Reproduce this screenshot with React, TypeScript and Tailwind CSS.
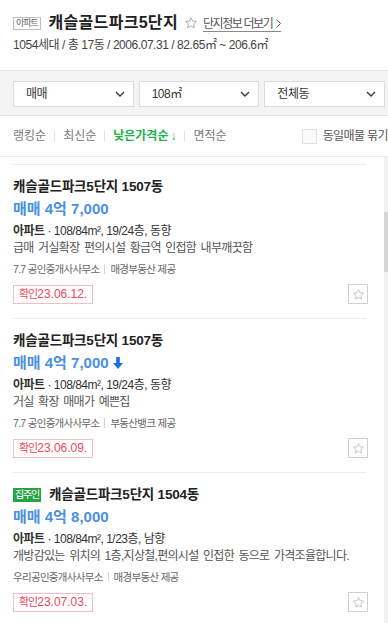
import React from "react";

const FONT = { fontFamily: '"Liberation Sans", "Noto Sans CJK KR", sans-serif' };

interface Listing {
  owner?: boolean;
  title: string;
  price: string;
  down?: boolean;
  spec: string;
  desc: string;
  agent: string;
  provider: string;
  confirmed: string;
}

const listings: Listing[] = [
  {
    title: "캐슬골드파크5단지 1507동",
    price: "매매 4억 7,000",
    spec: "108/84m², 19/24층, 동향",
    desc: "급매 거실확장 편의시설 황금역 인접함 내부깨끗함",
    agent: "7.7 공인중개사사무소",
    provider: "매경부동산 제공",
    confirmed: "23.06.12.",
  },
  {
    title: "캐슬골드파크5단지 1507동",
    price: "매매 4억 7,000",
    down: true,
    spec: "108/84m², 19/24층, 동향",
    desc: "거실 확장 매매가 예쁜집",
    agent: "7.7 공인중개사사무소",
    provider: "부동산뱅크 제공",
    confirmed: "23.06.09.",
  },
  {
    owner: true,
    title: "캐슬골드파크5단지 1504동",
    price: "매매 4억 8,000",
    spec: "108/84m², 1/23층, 남향",
    desc: "개방감있는 위치의 1층,지상철,편의시설 인접한 동으로 가격조율합니다.",
    agent: "우리공인중개사사무소",
    provider: "매경부동산 제공",
    confirmed: "23.07.03.",
  },
];

function StarIcon({ className }: { className?: string }) {
  return (
    <svg viewBox="0 0 24 24" className={className} fill="none" stroke="currentColor" strokeWidth="1.4" strokeLinejoin="round">
      <path d="M12 2.8l2.75 5.9 6.45.75-4.8 4.4 1.3 6.4L12 17.05 6.3 20.25l1.3-6.4-4.8-4.4 6.45-.75z" />
    </svg>
  );
}

function Chevron() {
  return (
    <svg viewBox="0 0 10 6" className="h-[6px] w-[10px] text-[#333]" fill="none" stroke="currentColor" strokeWidth="1.3">
      <path d="M1 1l4 4 4-4" />
    </svg>
  );
}

function Select({ label }: { label: string }) {
  return (
    <div className="flex h-[26px] flex-1 items-center justify-between border border-[#dcdcdc] bg-white pl-[12px] pr-[8px] text-[12px] tracking-[-0.5px] text-[#333]">
      <span>{label}</span>
      <Chevron />
    </div>
  );
}

function Sep() {
  return <span className="mx-[8px] h-[11px] w-px bg-[#e2e2e2]" />;
}

function ListingItem({ item }: { item: Listing }) {
  return (
    <div className="border-b border-[#ececec] pt-[13px] pb-[14px]">
      <div className="flex items-center leading-[18px]">
        {item.owner && (
          <span className="mr-[8px] bg-[#27a345] px-[2px] text-[10px] leading-[14px] tracking-[-1.2px] text-white">집주인</span>
        )}
        <span className="text-[13.5px] font-bold tracking-[-0.2px] text-[#222]">{item.title}</span>
      </div>
      <div className="mt-[2px] flex items-center text-[15px] font-bold leading-[22px] text-[#4a8fe2]">
        {item.price}
        {item.down && (
          <svg viewBox="0 0 10 12" className="ml-[4px] h-[12px] w-[10px] text-[#1a6fe0]" fill="currentColor">
            <path d="M3.2 0h3.6v6H10L5 12 0 6h3.2z" />
          </svg>
        )}
      </div>
      <div className="mt-[3px] text-[12px] leading-[17px] tracking-[-0.5px] text-[#333]">
        <span className="font-bold">아파트</span> · {item.spec}
      </div>
      <div className="text-[12px] leading-[17px] tracking-[-0.7px] text-[#555] [word-spacing:1.8px]">{item.desc}</div>
      <div className="mt-[4px] flex items-center text-[10.5px] leading-[16px] tracking-[-0.7px] text-[#666]">
        {item.agent}
        <span className="mx-[5px] h-[10px] w-px bg-[#d5d5d5]" />
        {item.provider}
      </div>
      <div className="mt-[7px] flex items-center justify-between">
        <span className="flex items-center border border-[#f8bcc5] px-[5px] leading-[17px] text-[#f0465a]">
          <span className="text-[11px] tracking-[-1px]">확인</span>
          <span className="text-[12px]">{item.confirmed}</span>
        </span>
        <span className="-mr-[2px] flex h-[20px] w-[20px] items-center justify-center border border-[#d0d0d0] text-[#b5b5b5]">
          <StarIcon className="h-[13px] w-[13px]" />
        </span>
      </div>
    </div>
  );
}

export default function App() {
  return (
    <div className="h-[623px] w-[388px] overflow-hidden bg-white" style={FONT}>
      {/* 단지 헤더 */}
      <div className="px-[13px] pt-[12px] pb-[16px]">
        <div className="flex items-center">
          <span className="border border-[#bdbdbd] px-[2px] text-[9px] leading-[11px] tracking-[-1.1px] text-[#666]">아파트</span>
          <span className="ml-[8px] text-[16px] font-bold leading-[22px] tracking-[0.3px] text-[#222]">캐슬골드파크5단지</span>
          <StarIcon className="ml-[6px] h-[14px] w-[14px] text-[#9a9a9a]" />
          <span className="ml-[5px] mt-[2px] flex items-center border-b border-[#8a8a8a] text-[12px] leading-[14px] tracking-[-1.4px] text-[#555]">
            단지정보 더보기
            <svg viewBox="0 0 5 9" className="ml-[4px] h-[9px] w-[5px]" fill="none" stroke="currentColor" strokeWidth="1">
              <path d="M0.5 0.5l4 4-4 4" />
            </svg>
          </span>
        </div>
        <div className="mt-[2px] text-[12px] leading-[18px] tracking-[-0.45px] text-[#444]">
          1054세대 / 총 17동 / 2006.07.31 / 82.65㎡ ~ 206.6㎡
        </div>
      </div>

      {/* 필터 */}
      <div className="flex gap-[5px] border-y border-[#e6e6e6] bg-[#f4f4f4] pl-[13px] pr-[3px] pt-[10px] pb-[8px]">
        <Select label="매매" />
        <Select label="108㎡" />
        <Select label="전체동" />
      </div>

      {/* 정렬 */}
      <div className="flex h-[41px] items-center border-b border-[#ececec] pl-[13px] text-[12px] text-[#777]">
        <span>랭킹순</span>
        <Sep />
        <span>최신순</span>
        <Sep />
        <span className="font-bold text-[#22b14c]">
          낮은가격순<span className="ml-[2px] font-normal">↓</span>
        </span>
        <Sep />
        <span>면적순</span>
        <span className="ml-auto flex shrink-0 items-center whitespace-nowrap">
          <span className="mr-[6px] h-[15px] w-[15px] shrink-0 border border-[#e2e2e2] bg-[#fafafa]" />
          <span className="tracking-[-0.6px] text-[#555]">동일매물 묶기</span>
        </span>
      </div>

      {/* 매물 목록 */}
      <div className="flex">
        <div className="flex-1 pl-[13px] pr-[18px] pt-[7px]">
          <div className="border-t border-[#ececec]">
            {listings.map((item, i) => (
              <ListingItem key={i} item={item} />
            ))}
          </div>
        </div>
        <div className="w-[4px] bg-[#f1f1f1] pt-[55px]">
          <div className="h-[60px] w-full bg-[#d6d6d6]" />
        </div>
      </div>
    </div>
  );
}
